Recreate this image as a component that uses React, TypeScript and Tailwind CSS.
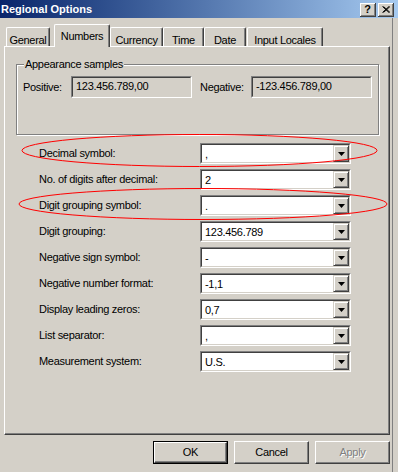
import React from "react";

const FONT = { fontFamily: '"Liberation Sans", Arial, sans-serif' };

function Arrow() {
  return (
    <svg width="7" height="4" viewBox="0 0 7 4" className="block">
      <polygon points="0,0 7,0 3.5,4" fill="#000" />
    </svg>
  );
}

function Combo({ value }: { value: string }) {
  return (
    <div className="w-[151px] h-[21px] border-t border-l border-[#808080] border-b border-r border-b-white border-r-white">
      <div className="w-full h-full border-t border-l border-[#404040] border-b border-r border-b-[#d4d0c8] border-r-[#d4d0c8] bg-white flex items-center">
        <div className="flex-1 pl-[3px] pt-[1px] text-[11px] leading-[13px] tracking-[-0.3px] text-black whitespace-nowrap">{value}</div>
        <div className="w-[16px] h-[17px] bg-[#d4d0c8] border-t border-l border-[#d4d0c8] border-b border-r border-b-[#404040] border-r-[#404040] shadow-[inset_1px_1px_0_#ffffff,inset_-1px_-1px_0_#808080] flex items-center justify-center">
          <Arrow />
        </div>
      </div>
    </div>
  );
}

function Field({ value }: { value: string }) {
  return (
    <div className="w-[121px] h-[22px] border-t border-l border-[#808080] border-b border-r border-b-white border-r-white">
      <div className="w-full h-full border-t border-l border-[#404040] border-b border-r border-b-[#d4d0c8] border-r-[#d4d0c8] bg-[#d4d0c8] pl-[3px] pt-[2px] text-[11px] leading-[13px] tracking-[-0.3px] text-black whitespace-nowrap">
        {value}
      </div>
    </div>
  );
}

function Tab({ label, w, ml = 0, selected = false }: { label: string; w: number; ml?: number; selected?: boolean }) {
  return (
    <div
      className={
        "relative flex justify-center border-t border-l border-white border-r border-r-[#404040] rounded-tl-[2px] rounded-tr-[2px] bg-[#d4d0c8] shadow-[inset_-1px_0_0_#808080] text-[11px] tracking-[-0.3px] text-black whitespace-nowrap " +
        (selected ? "h-[23px] mb-[-1px] z-10 pt-[3px]" : "h-[19px] pt-[4px]")
      }
      style={{ width: w, marginLeft: ml }}
    >
      {label}
    </div>
  );
}

function Btn({ label, def = false, disabled = false }: { label: string; def?: boolean; disabled?: boolean }) {
  const inner = (
    <div
      className={
        "h-full w-full flex items-center justify-center border-t border-l border-white border-b border-r border-b-[#404040] border-r-[#404040] shadow-[inset_-1px_-1px_0_#808080] text-[11px] tracking-[-0.3px] " +
        (disabled ? "text-[#808080] [text-shadow:1px_1px_0_#ffffff]" : "text-black")
      }
    >
      {label}
    </div>
  );
  if (def) {
    return <div className="w-[75px] h-[23px] border border-black">{inner}</div>;
  }
  return <div className="w-[75px] h-[23px]">{inner}</div>;
}

const rows: [string, string][] = [
  ["Decimal symbol:", ","],
  ["No. of digits after decimal:", "2"],
  ["Digit grouping symbol:", "."],
  ["Digit grouping:", "123.456.789"],
  ["Negative sign symbol:", "-"],
  ["Negative number format:", "-1,1"],
  ["Display leading zeros:", "0,7"],
  ["List separator:", ","],
  ["Measurement system:", "U.S."],
];

export default function App() {
  return (
    <div className="relative w-[398px] h-[472px] bg-[#d4d0c8] overflow-hidden flex flex-col" style={FONT}>
      {/* Title bar */}
      <div className="h-[18px] flex items-center justify-between pl-[1px] pr-[4px] bg-gradient-to-r from-[#0a246a] to-[#a6caf0]">
        <div className="text-white font-bold text-[11px] leading-[13px]">Regional Options</div>
        <div className="flex gap-[2px] mt-[1px]">
          <div className="w-[16px] h-[14px] bg-[#d4d0c8] border-b border-r border-[#404040] shadow-[inset_1px_1px_0_#ffffff,inset_-1px_-1px_0_#808080] flex items-center justify-center">
            <span className="text-[11px] font-bold leading-[11px] text-black">?</span>
          </div>
          <div className="w-[16px] h-[14px] bg-[#d4d0c8] border-b border-r border-[#404040] shadow-[inset_1px_1px_0_#ffffff,inset_-1px_-1px_0_#808080] flex items-center justify-center">
            <svg width="8" height="7" viewBox="0 0 8 7" className="block">
              <path d="M0.5 0.5 L7 6.5 M1.5 0.5 L8 6.5 M7 0.5 L0.5 6.5 M8 0.5 L1.5 6.5" stroke="#000" strokeWidth="1" />
            </svg>
          </div>
        </div>
      </div>

      {/* Tabs */}
      <div className="mt-[6px] h-[22px] flex items-end pl-[6px] relative z-10">
        <Tab label="General" w={44} />
        <Tab label="Numbers" w={56} ml={4} selected />
        <Tab label="Currency" w={53} />
        <Tab label="Time" w={41} />
        <Tab label="Date" w={42} />
        <Tab label="Input Locales" w={76} ml={1} />
      </div>

      {/* Panel */}
      <div className="ml-[4px] w-[386px] h-[389px] border-t border-l border-white border-b border-r border-b-[#404040] border-r-[#404040] shadow-[inset_-1px_-1px_0_#808080] flex flex-col">
        {/* Group box */}
        <div className="relative mt-[17px] ml-[11px] w-[363px] h-[71px] border border-[#808080] shadow-[1px_1px_0_#ffffff,inset_1px_1px_0_#ffffff]">
          <div className="absolute left-[7px] top-[-7px] px-[1px] bg-[#d4d0c8] text-[11px] leading-[13px] tracking-[-0.3px] text-black whitespace-nowrap">
            Appearance samples
          </div>
          <div className="flex items-center mt-[11px] ml-[6px]">
            <div className="w-[48px] text-[11px] tracking-[-0.3px] text-black">Positive:</div>
            <Field value="123.456.789,00" />
            <div className="w-[51px] ml-[8px] text-[11px] tracking-[-0.3px] text-black">Negative:</div>
            <Field value="-123.456.789,00" />
          </div>
        </div>

        {/* Rows */}
        <div className="mt-[8px] flex flex-col gap-[5px]">
          {rows.map(([label, value]) => (
            <div key={label} className="flex items-center h-[21px]">
              <div className="w-[195px] pl-[34px] text-[11px] tracking-[-0.3px] text-black whitespace-nowrap">{label}</div>
              <Combo value={value} />
            </div>
          ))}
        </div>
      </div>

      {/* Buttons */}
      <div className="mt-[6px] flex gap-[6px] pl-[153px]">
        <Btn label="OK" def />
        <Btn label="Cancel" />
        <Btn label="Apply" disabled />
      </div>

      {/* Right window edge */}
      <div className="absolute top-[18px] bottom-0 left-[392px] w-[1px] bg-[#808080]" />

      {/* Red ellipses annotation */}
      <svg className="absolute inset-0 pointer-events-none" width="398" height="472" viewBox="0 0 398 472">
        <ellipse cx="199.5" cy="150.5" rx="177.5" ry="16" fill="none" stroke="#ff0000" strokeWidth="1" />
        <ellipse cx="203" cy="204" rx="184" ry="15.5" fill="none" stroke="#ff0000" strokeWidth="1" />
      </svg>
    </div>
  );
}
